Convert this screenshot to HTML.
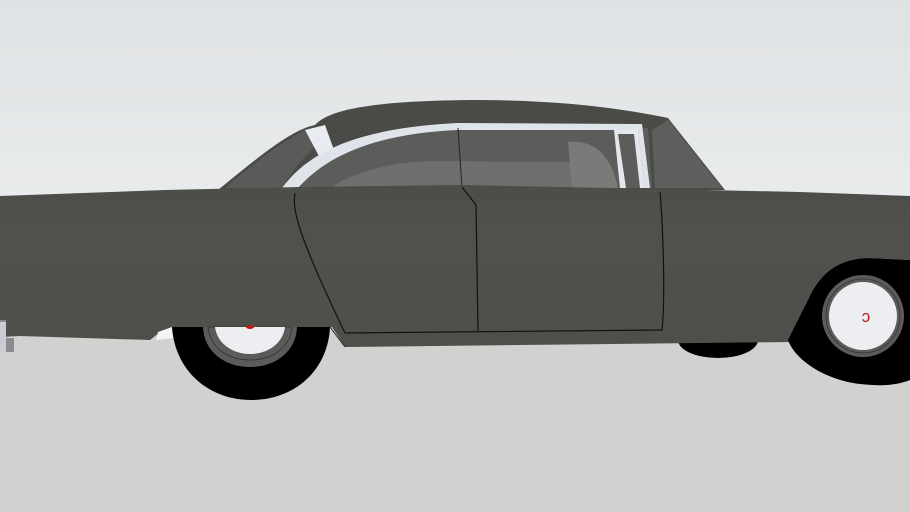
<!DOCTYPE html>
<html><head><meta charset="utf-8"><style>
html,body{margin:0;padding:0;width:910px;height:512px;overflow:hidden;background:#d1d1cf}
svg{display:block}
</style></head><body>
<svg width="910" height="512" viewBox="0 0 910 512" xmlns="http://www.w3.org/2000/svg">
<defs>
<linearGradient id="sky" x1="0" y1="0" x2="0" y2="1">
<stop offset="0" stop-color="#dfe2e4"/><stop offset="1" stop-color="#eef0f1"/>
</linearGradient>
<linearGradient id="body" x1="0" y1="0" x2="0" y2="1">
<stop offset="0" stop-color="#4c4d48"/><stop offset="0.3" stop-color="#50514c"/><stop offset="1" stop-color="#4e4f4a"/>
</linearGradient>
</defs>
<rect x="0" y="0" width="910" height="300" fill="url(#sky)"/>
<rect x="0" y="300" width="910" height="212" fill="#d1d1cf"/>

<!-- middle wheel under car -->
<ellipse cx="718" cy="340" rx="40" ry="18" fill="#000"/>

<!-- roof -->
<path d="M218,190 C255,160 290,130 315,125 C330,108 380,101 470,100 C560,100 620,108 668,118 L725,190 Z" fill="#4a4b46"/>
<!-- windshield glass -->
<path d="M225,188 C255,162 285,140 305,130 L322,140 C300,160 290,175 282,188 Z" fill="#5a5b58"/>
<path d="M305,130 L325,125 L334,150 L320,158 Z" fill="#e8ecf0"/>
<!-- side glass -->
<path d="M296,188 C330,150 380,130 458,127 L610,128 L648,128 L652,188 Z" fill="#5c5d5b"/>
<path d="M330,188 C360,168 400,162 430,161 L570,162 L572,188 Z" fill="#6e6f6d"/>
<path d="M568,142 C590,140 610,150 618,188 L572,188 Z" fill="#7a7b79"/>
<!-- chrome strip -->
<path d="M282,188 C310,150 360,128 458,123 L642,124 L650,188 L645,188 L638,130 L458,130 C370,134 325,158 298,188 Z" fill="#dfe4ea"/>
<path d="M614,130 L638,130 L645,188 L640,188 L634,134 L618,134 L626,188 L620,188 Z" fill="#e4e8ec"/>
<line x1="458" y1="128" x2="462" y2="188" stroke="#222" stroke-width="1"/>
<!-- rear window -->
<path d="M652,130 L668,120 L722,188 L655,188 Z" fill="#5e5f5c"/>

<!-- body -->
<path d="M0,196 L165,190 L300,187 L460,185 L660,189 L800,192 L910,196 L910,260 L870,258 C840,258 820,272 808,300 L790,342 L345,347 L332,327 L172,327 L160,332 L150,340 L20,336 L0,337 Z" fill="url(#body)"/>
<path d="M0,320 L6,320 L6,352 L14,352 L14,338 L0,338 Z" fill="#8a8c90"/>
<path d="M0,322 L6,322 L6,350 L0,352 Z" fill="#c9ccd2"/>
<path d="M158,332 L172,327 L175,338 L156,340 Z" fill="#f4f5f7"/>

<!-- panel lines -->
<path d="M295,193 C292,210 298,235 345,333 L662,330 C666,290 662,215 660,192" fill="none" stroke="#111" stroke-width="1.2"/>
<path d="M462,187 L476,205 L478,332" fill="none" stroke="#111" stroke-width="1.2"/>
<line x1="330" y1="327" x2="345" y2="347" stroke="#222" stroke-width="1"/>

<!-- left wheel -->
<path d="M172,327 L330,327 C328,370 295,400 251,400 C210,400 175,372 172,327 Z" fill="#000"/>
<path d="M203,327 L297,327 C296,352 275,367 250,367 C225,367 204,352 203,327 Z" fill="#5b5c5a"/>
<path d="M208,327 L292,327 C290,348 272,360 250,360 C228,360 210,348 208,327 Z" fill="none" stroke="#333" stroke-width="0.8"/>
<path d="M215,327 L285,327 C283,343 268,354 250,354 C232,354 217,343 215,327 Z" fill="#eceef2"/>
<ellipse cx="250" cy="327" rx="4" ry="2" fill="#c01818"/>

<!-- right wheel -->
<path d="M808,300 C820,272 840,258 870,258 L910,260 L910,380 C895,386 880,386 860,384 C825,380 795,360 788,340 Z" fill="#000"/>
<circle cx="863" cy="316" r="41" fill="#5b5c5a"/>
<circle cx="863" cy="316" r="37" fill="none" stroke="#333" stroke-width="0.8"/>
<circle cx="863" cy="316" r="34" fill="#eceef2"/>
<text x="866" y="322" font-family="Liberation Sans, sans-serif" font-size="17" fill="#c01818" text-anchor="middle" transform="scale(-1,1) translate(-1732,0)">c</text>
</svg>
</body></html>
